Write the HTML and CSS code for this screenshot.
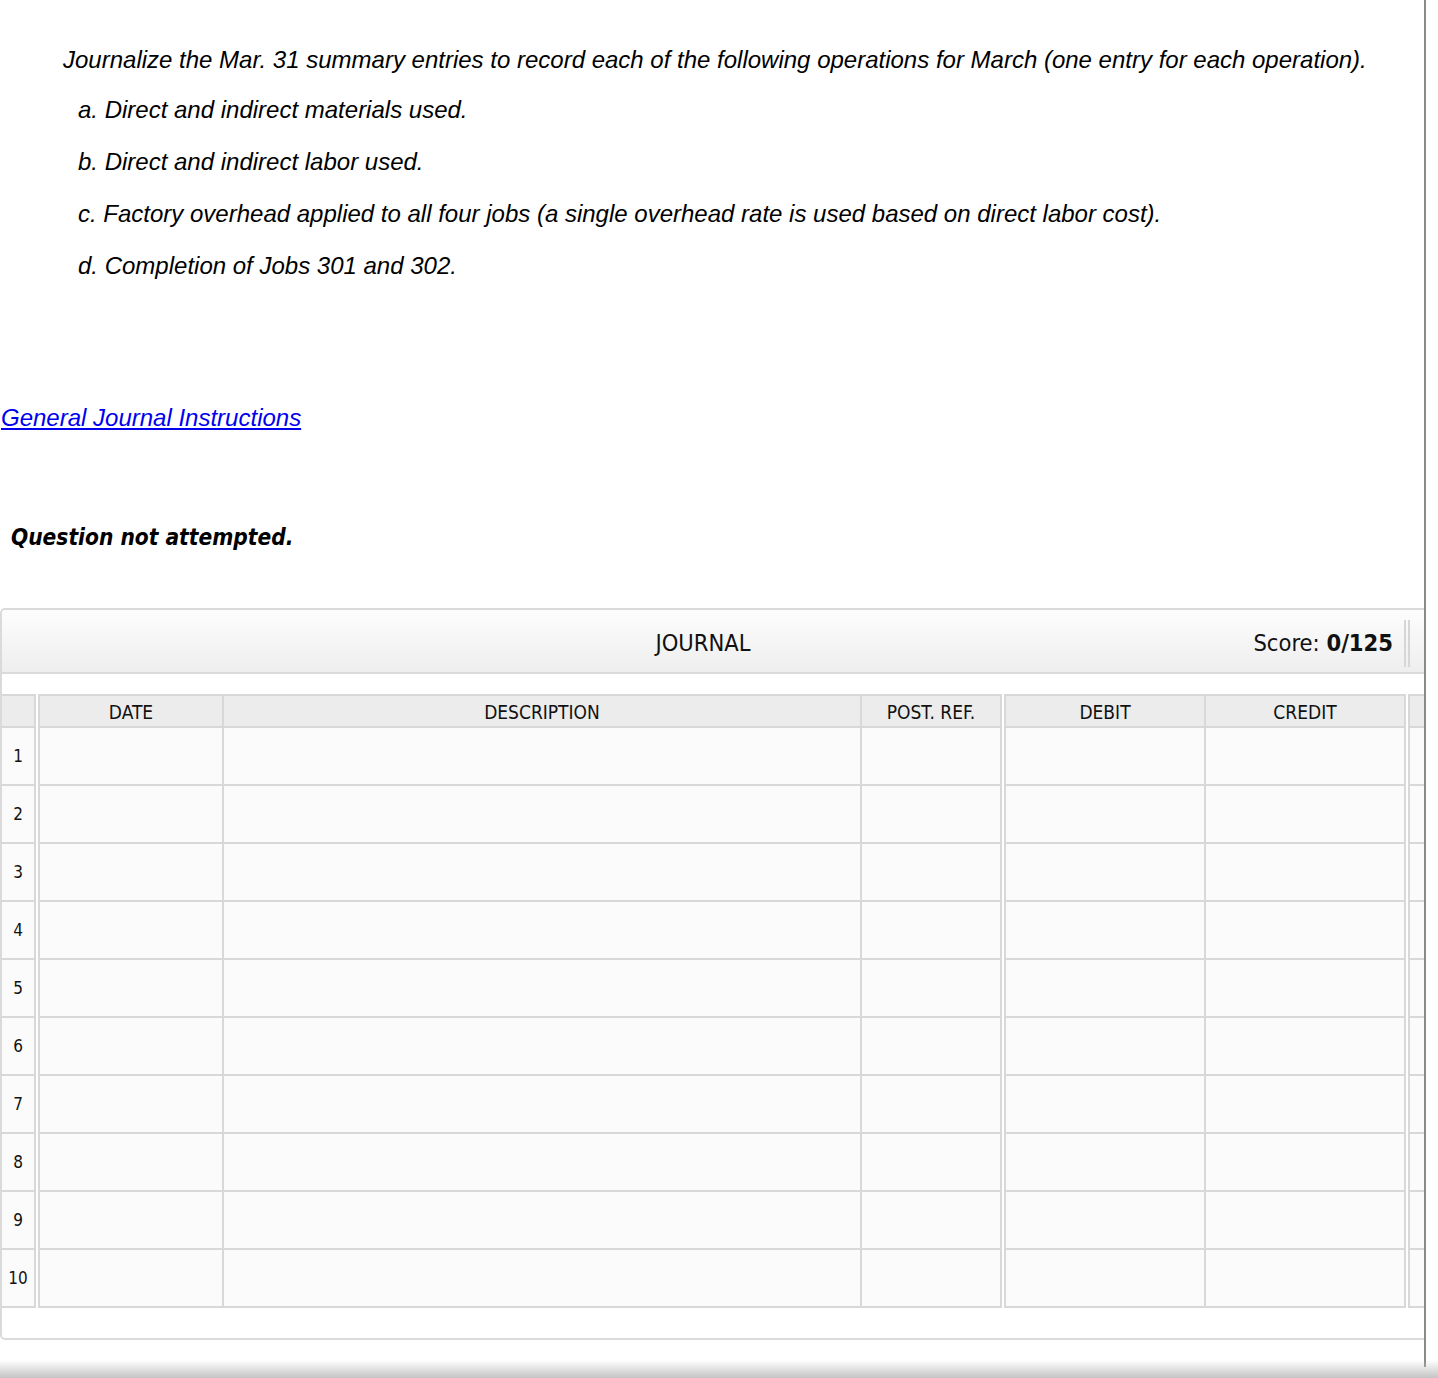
FILE: index.html
```html
<!DOCTYPE html>
<html>
<head>
<meta charset="utf-8">
<link rel="stylesheet" href="styles.css">
</head>
<body>
<div class="page">
  <div class="prompt">
    <p class="lead">Journalize the Mar. 31 summary entries to record each of the following operations for March (one entry for each operation).</p>
    <p class="item">a. Direct and indirect materials used.</p>
    <p class="item">b. Direct and indirect labor used.</p>
    <p class="item">c. Factory overhead applied to all four jobs (a single overhead rate is used based on direct labor cost).</p>
    <p class="item">d. Completion of Jobs 301 and 302.</p>
  </div>
  <a class="link" href="#">General Journal Instructions</a>
  <p class="status">Question not attempted.</p>

  <div class="panel">
    <div class="band">
      <div class="band-main">
        <span></span>
        <span class="title">JOURNAL</span>
        <span class="score">Score: <b>0/125</b></span>
      </div>
      <div class="divider"></div>
    </div>
    <div class="grid">
      <div class="group g-num">
        <div class="row head"><div class="cell c-num"></div></div>
        <div class="row"><div class="cell c-num">1</div></div>
        <div class="row"><div class="cell c-num">2</div></div>
        <div class="row"><div class="cell c-num">3</div></div>
        <div class="row"><div class="cell c-num">4</div></div>
        <div class="row"><div class="cell c-num">5</div></div>
        <div class="row"><div class="cell c-num">6</div></div>
        <div class="row"><div class="cell c-num">7</div></div>
        <div class="row"><div class="cell c-num">8</div></div>
        <div class="row"><div class="cell c-num">9</div></div>
        <div class="row"><div class="cell c-num">10</div></div>
      </div>
      <div class="group">
        <div class="row head"><div class="cell c-date">DATE</div><div class="cell c-desc">DESCRIPTION</div><div class="cell c-ref">POST. REF.</div></div>
        <div class="row"><div class="cell c-date"></div><div class="cell c-desc"></div><div class="cell c-ref"></div></div>
        <div class="row"><div class="cell c-date"></div><div class="cell c-desc"></div><div class="cell c-ref"></div></div>
        <div class="row"><div class="cell c-date"></div><div class="cell c-desc"></div><div class="cell c-ref"></div></div>
        <div class="row"><div class="cell c-date"></div><div class="cell c-desc"></div><div class="cell c-ref"></div></div>
        <div class="row"><div class="cell c-date"></div><div class="cell c-desc"></div><div class="cell c-ref"></div></div>
        <div class="row"><div class="cell c-date"></div><div class="cell c-desc"></div><div class="cell c-ref"></div></div>
        <div class="row"><div class="cell c-date"></div><div class="cell c-desc"></div><div class="cell c-ref"></div></div>
        <div class="row"><div class="cell c-date"></div><div class="cell c-desc"></div><div class="cell c-ref"></div></div>
        <div class="row"><div class="cell c-date"></div><div class="cell c-desc"></div><div class="cell c-ref"></div></div>
        <div class="row"><div class="cell c-date"></div><div class="cell c-desc"></div><div class="cell c-ref"></div></div>
      </div>
      <div class="group">
        <div class="row head"><div class="cell c-amt">DEBIT</div><div class="cell c-amt">CREDIT</div></div>
        <div class="row"><div class="cell c-amt"></div><div class="cell c-amt"></div></div>
        <div class="row"><div class="cell c-amt"></div><div class="cell c-amt"></div></div>
        <div class="row"><div class="cell c-amt"></div><div class="cell c-amt"></div></div>
        <div class="row"><div class="cell c-amt"></div><div class="cell c-amt"></div></div>
        <div class="row"><div class="cell c-amt"></div><div class="cell c-amt"></div></div>
        <div class="row"><div class="cell c-amt"></div><div class="cell c-amt"></div></div>
        <div class="row"><div class="cell c-amt"></div><div class="cell c-amt"></div></div>
        <div class="row"><div class="cell c-amt"></div><div class="cell c-amt"></div></div>
        <div class="row"><div class="cell c-amt"></div><div class="cell c-amt"></div></div>
        <div class="row"><div class="cell c-amt"></div><div class="cell c-amt"></div></div>
      </div>
      <div class="group">
        <div class="row head"><div class="cell c-extra"></div></div>
        <div class="row"><div class="cell c-extra"></div></div>
        <div class="row"><div class="cell c-extra"></div></div>
        <div class="row"><div class="cell c-extra"></div></div>
        <div class="row"><div class="cell c-extra"></div></div>
        <div class="row"><div class="cell c-extra"></div></div>
        <div class="row"><div class="cell c-extra"></div></div>
        <div class="row"><div class="cell c-extra"></div></div>
        <div class="row"><div class="cell c-extra"></div></div>
        <div class="row"><div class="cell c-extra"></div></div>
        <div class="row"><div class="cell c-extra"></div></div>
      </div>
    </div>
  </div>
</div>
<div class="shade"></div>
</body>
</html>
```

FILE: styles.css
```css
* { box-sizing: border-box; }
html, body { margin: 0; padding: 0; background: #fff; }
body { width: 1438px; height: 1378px; overflow: hidden; }

.page {
  width: 1426px;
  height: 1367px;
  border-right: 2px solid #8a8a8a;
  overflow: hidden;
  padding-top: 47px;
}

.prompt {
  padding-left: 63px;
  font-family: "Liberation Sans", Arial, sans-serif;
  font-style: italic;
  font-size: 24px;
  line-height: 26px;
  color: #000;
}
.prompt p { margin: 0; white-space: nowrap; }
.prompt .lead { margin-bottom: 24px; }
.prompt .item { padding-left: 15px; margin-bottom: 26px; }
.prompt .item:last-child { margin-bottom: 0; }

.link {
  display: inline-block;
  margin-top: 126px;
  margin-left: 1px;
  font-family: "Liberation Sans", Arial, sans-serif;
  font-style: italic;
  font-size: 24px;
  line-height: 26px;
  color: #0000ee;
  text-decoration: underline;
}

.status {
  margin: 93px 0 0 11px;
  font-family: "DejaVu Sans Condensed", "DejaVu Sans", sans-serif;
  font-weight: bold;
  font-style: italic;
  font-size: 22.5px;
  line-height: 26px;
  color: #000;
}

.panel {
  margin-top: 58px;
  width: 1470px;
  border: 2px solid #dadada;
  border-radius: 5px;
  padding-bottom: 30px;
  background: #fff;
  font-family: "DejaVu Sans Condensed", "DejaVu Sans", sans-serif;
  color: #111;
}

.band {
  height: 64px;
  display: flex;
  align-items: center;
  background: linear-gradient(#fdfdfd, #eeeeee);
  border-bottom: 2px solid #dadada;
  border-radius: 4px 4px 0 0;
}
.band-main {
  width: 1402px;
  display: grid;
  grid-template-columns: 1fr auto 1fr;
  align-items: center;
  padding-top: 3px;
}
.title { font-size: 23.5px; }
.score { justify-self: end; padding-right: 11px; font-size: 23.5px; }
.score b { font-weight: bold; }
.divider {
  width: 6px;
  height: 47px;
  border-left: 2px solid #d6d6d6;
  border-right: 2px solid #d6d6d6;
  margin-top: 4px;
}

.grid {
  display: flex;
  gap: 2px;
  margin-top: 20px;
}
.group {
  border-top: 2px solid #d8d8d8;
  border-left: 2px solid #d8d8d8;
}
.group.g-num { border-left: none; }
.row { display: flex; height: 58px; }
.row.head { height: 32px; }
.cell {
  border-right: 2px solid #d8d8d8;
  border-bottom: 2px solid #d8d8d8;
  background: #fbfbfb;
  display: flex;
  align-items: center;
  justify-content: center;
}
.head .cell { background: #ececec; font-size: 19px; padding-top: 1px; }
.c-num { width: 34px; font-size: 17px; }
.c-date { width: 184px; }
.c-desc { width: 638px; }
.c-ref { width: 140px; }
.c-amt { width: 200px; }
.c-extra { width: 80px; }

.shade {
  position: fixed;
  left: 0;
  right: 0;
  bottom: 0;
  height: 18px;
  background: linear-gradient(rgba(200,200,200,0), rgba(190,190,190,0.9));
}
```
